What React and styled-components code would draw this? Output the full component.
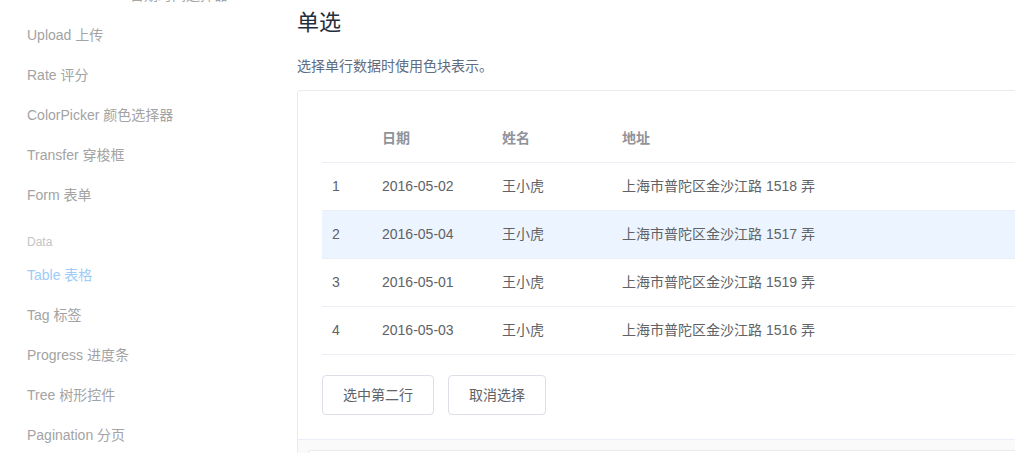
import React from "react";
import styled, { createGlobalStyle } from "styled-components";

const Global = createGlobalStyle`
  html, body { margin: 0; padding: 0; background: #fff; }
  body {
    font-family: "Liberation Sans", Arial, "Noto Sans CJK SC", sans-serif;
    overflow: hidden;
  }
  * { box-sizing: border-box; }
`;

const Page = styled.div`
  display: flex;
  align-items: flex-start;
  width: 1015px;
  height: 453px;
  overflow: hidden;
`;

const Sidebar = styled.nav`
  flex: 0 0 297px;
  display: flex;
  flex-direction: column;
  padding-left: 27px;
  & > * { flex-shrink: 0; }
`;

const Peek = styled.div`
  height: 15px;
  overflow: hidden;
  padding-left: 103px;
  font-size: 14px;
  color: #a6a6a6;
  & > span {
    display: block;
    height: 40px;
    line-height: 40px;
    margin-top: -25px;
  }
`;

const NavItem = styled.div`
  height: 40px;
  line-height: 40px;
  font-size: 14px;
  color: ${(p) => (p.$active ? "#9ecbf8" : "#a3a3a3")};
  white-space: nowrap;
`;

const GroupTitle = styled.div`
  height: 40px;
  display: flex;
  align-items: flex-end;
  padding-bottom: 6px;
  line-height: 14px;
  font-size: 12px;
  color: #c4c4c4;
`;

const Main = styled.main`
  flex: 0 0 760px;
  display: flex;
  flex-direction: column;
`;

const Title = styled.h3`
  margin: 0;
  padding-top: 8px;
  line-height: 30px;
  font-size: 22px;
  font-weight: 400;
  color: #1f2f3d;
`;

const Desc = styled.p`
  margin: 18px 0 13px;
  line-height: 21px;
  font-size: 14px;
  color: #5e6d82;
`;

const Card = styled.div`
  border: 1px solid #ebebeb;
  border-radius: 3px;
  width: 760px;
`;

const Source = styled.div`
  padding: 24px;
`;

const Table = styled.div`
  display: flex;
  flex-direction: column;
  font-size: 14px;
`;

const Row = styled.div`
  display: grid;
  grid-template-columns: 50px 120px 120px 1fr;
  height: 48px;
  align-items: center;
  border-bottom: 1px solid #ebeef5;
  background: ${(p) => (p.$current ? "#ecf5ff" : "#fff")};
`;

const Cell = styled.div`
  padding-left: 10px;
  line-height: 23px;
  color: ${(p) => (p.$head ? "#909399" : "#606266")};
  font-weight: ${(p) => (p.$head ? 700 : 400)};
  white-space: nowrap;
`;

const Actions = styled.div`
  display: flex;
  gap: 14px;
  margin-top: 20px;
`;

const Button = styled.button`
  height: 40px;
  padding: 0 20px;
  border: 1px solid #dcdfe6;
  border-radius: 4px;
  background: #fff;
  color: #606266;
  font-family: inherit;
  font-size: 14px;
  line-height: 1;
`;

const Meta = styled.div`
  background: #fafafa;
  border-top: 1px solid #eaeefb;
  padding: 10px;
`;

const Description = styled.div`
  height: 60px;
  border: 1px solid #ebebeb;
  border-radius: 3px;
  background: #fff;
`;

const rows = [
  { date: "2016-05-02", name: "王小虎", addr: "上海市普陀区金沙江路 1518 弄" },
  { date: "2016-05-04", name: "王小虎", addr: "上海市普陀区金沙江路 1517 弄" },
  { date: "2016-05-01", name: "王小虎", addr: "上海市普陀区金沙江路 1519 弄" },
  { date: "2016-05-03", name: "王小虎", addr: "上海市普陀区金沙江路 1516 弄" },
];

const navTop = ["Upload 上传", "Rate 评分", "ColorPicker 颜色选择器", "Transfer 穿梭框", "Form 表单"];
const navData = ["Table 表格", "Tag 标签", "Progress 进度条", "Tree 树形控件", "Pagination 分页"];

export default function App() {
  return (
    <>
      <Global />
      <Page>
        <Sidebar>
          <Peek>
            <span>日期时间选择器</span>
          </Peek>
          {navTop.map((t) => (
            <NavItem key={t}>{t}</NavItem>
          ))}
          <GroupTitle>Data</GroupTitle>
          {navData.map((t, i) => (
            <NavItem key={t} $active={i === 0}>
              {t}
            </NavItem>
          ))}
        </Sidebar>
        <Main>
          <Title>单选</Title>
          <Desc>选择单行数据时使用色块表示。</Desc>
          <Card>
            <Source>
              <Table>
                <Row>
                  <Cell $head></Cell>
                  <Cell $head>日期</Cell>
                  <Cell $head>姓名</Cell>
                  <Cell $head>地址</Cell>
                </Row>
                {rows.map((r, i) => (
                  <Row key={i} $current={i === 1}>
                    <Cell>{i + 1}</Cell>
                    <Cell>{r.date}</Cell>
                    <Cell>{r.name}</Cell>
                    <Cell>{r.addr}</Cell>
                  </Row>
                ))}
              </Table>
              <Actions>
                <Button>选中第二行</Button>
                <Button>取消选择</Button>
              </Actions>
            </Source>
            <Meta>
              <Description />
            </Meta>
          </Card>
        </Main>
      </Page>
    </>
  );
}
